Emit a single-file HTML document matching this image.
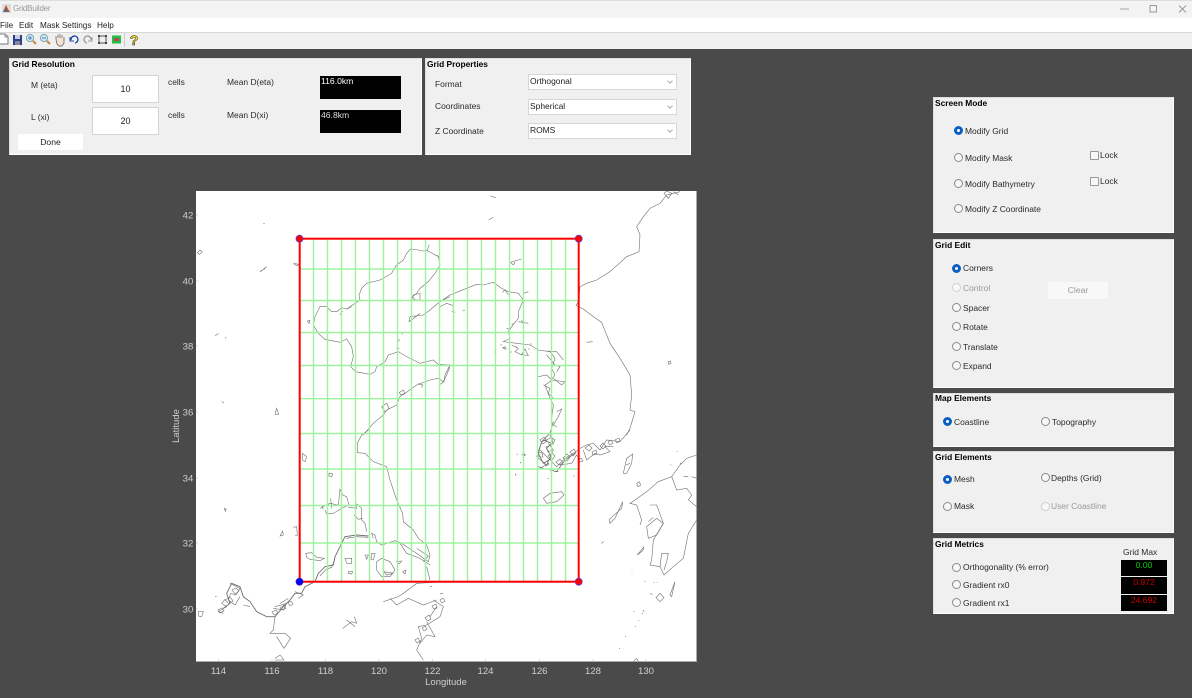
<!DOCTYPE html>
<html><head><meta charset="utf-8"><title>GridBuilder</title>
<style>
html,body{margin:0;padding:0;width:1192px;height:698px;overflow:hidden;background:#4a4a4a;font-family:"Liberation Sans",sans-serif;font-size:9px;color:#222}
div,span{position:absolute;box-sizing:border-box;white-space:nowrap}
.p{background:#f0f0f0;border:1px solid #fff;border-left-color:#ddd;border-top-color:#ddd}
.h{font-weight:bold;color:#000;font-size:8.4px;line-height:11px}
.t{line-height:11px;font-size:8.45px;color:#2a2a2a}
.m{line-height:11px;font-size:8.2px;color:#222}
.r{width:9px;height:9px;border-radius:50%;border:1px solid #8a8a8a;background:#f8f8f8}
.r.on{background:#fff;border:3px solid #0a5fc0}
.r.dis{border-color:#d0d0d0}
.dim{color:#999}
.inp{background:#fff;border:1px solid #d4d4d4;text-align:center;font-size:9px;color:#222}
.sel{background:#fff;border:1px solid #d6d6d6;font-size:8.45px;color:#222;line-height:13px;padding-left:1px}
.sel:after{content:"";position:absolute;right:4px;top:4px;width:3px;height:3px;border-right:1px solid #aaa;border-bottom:1px solid #aaa;transform:rotate(45deg)}
.blk{background:#000;font-size:8.6px;line-height:11px}
.cb{width:9px;height:9px;border:1px solid #999;background:#f8f8f8;border-radius:1px}
svg path{vector-effect:non-scaling-stroke}
.tk{fill:#cfcfcf;font-size:9.6px;font-family:"Liberation Sans",sans-serif;text-anchor:middle}
</style></head><body>

<div style="left:0;top:0;width:1192px;height:18px;background:#f3f3f3;border-top:1px solid #ddd"></div>
<div style="left:0;top:18px;width:1192px;height:14px;background:#fff"></div>
<div style="left:0;top:32px;width:1192px;height:17px;background:#f0f0f0;border-top:1px solid #d8d8d8"></div>

<svg style="position:absolute;left:2px;top:4px" width="9" height="9" viewBox="0 0 9 9"><rect width="9" height="9" fill="#ddd"/><path d="M1 8L4 1L6 5L8 8Z" fill="#c8501e"/><path d="M1 8L4 4L5 8Z" fill="#3070b0"/></svg>
<span style="left:13px;top:3px;font-size:8px;letter-spacing:-.25px;line-height:12px;color:#9a9a9a">GridBuilder</span>

<svg style="position:absolute;left:1115px;top:0" width="77" height="18"><path d="M5 9H14" stroke="#aaa"/><rect x="35" y="5.500" width="6.500" height="6.500" fill="none" stroke="#999"/><path d="M64 5.500L71 12.500M71 5.500L64 12.500" stroke="#999"/></svg>

<span class="m" style="left:0;top:20px">File</span>
<span class="m" style="left:19px;top:20px">Edit</span>
<span class="m" style="left:40px;top:20px">Mask Settings</span>
<span class="m" style="left:97px;top:20px">Help</span>

<svg style="position:absolute;left:0;top:32px" width="145" height="17" viewBox="0 0 145 17">
<path d="M-1 2H5L8 5V12H-1Z" fill="#fff" stroke="#777"/><path d="M5 2V5H8" fill="none" stroke="#999"/>
<rect x="13" y="3" width="9" height="10" fill="#2b3f8f"/><rect x="15" y="3" width="5" height="4" fill="#ccd"/><rect x="15" y="9" width="5" height="4" fill="#889"/>
<circle cx="30" cy="6" r="3.600" fill="#cfe6f8" stroke="#7aa"/><path d="M33 9L36 12" stroke="#c08a40" stroke-width="2"/><path d="M28 6H32M30 4V8" stroke="#36a" stroke-width=".8"/>
<circle cx="44" cy="6" r="3.600" fill="#cfe6f8" stroke="#7aa"/><path d="M47 9L50 12" stroke="#c08a40" stroke-width="2"/><path d="M42 6H46" stroke="#36a" stroke-width=".8"/>
<path d="M56 7V4M58 6V2.500M60 6V2M62 6V3M64 7V5M56 7L57 12L59 14H62L64 11V6" fill="#f3e3d0" stroke="#777" stroke-width=".9"/>
<path d="M71 8A3.500 3.500 0 1 1 75 11" fill="none" stroke="#1a3fa0" stroke-width="1.300"/><path d="M70 5V9H74" fill="none" stroke="#1a3fa0" stroke-width="1"/>
<path d="M91 8A3.500 3.500 0 1 0 87 11" fill="none" stroke="#999" stroke-width="1.300"/><path d="M92 5V9H88" fill="none" stroke="#999" stroke-width="1"/>
<rect x="99" y="4" width="7" height="7" fill="none" stroke="#555"/><path d="M98 3h2v2h-2zM105 3h2v2h-2zM98 10h2v2h-2zM105 10h2v2h-2z" fill="#444"/>
<rect x="112" y="3.500" width="9" height="8" fill="#22c040"/><rect x="114" y="6" width="5" height="3" fill="#c04060"/>
<path d="M124.500 1V15" stroke="#ccc"/>
<text x="134" y="13" font-family="Liberation Sans" font-weight="bold" font-size="14" text-anchor="middle" fill="#ffe000" stroke="#222" stroke-width=".5">?</text>
</svg>

<!-- Grid Resolution -->
<div class="p" style="left:9px;top:58px;width:413px;height:97px"></div>
<span class="h" style="left:12px;top:59px">Grid Resolution</span>
<span class="t" style="left:31px;top:80px">M (eta)</span>
<span class="t" style="left:31px;top:112px">L (xi)</span>
<div class="inp" style="left:92px;top:75px;width:67px;height:28px;line-height:26px">10</div>
<div class="inp" style="left:92px;top:107px;width:67px;height:28px;line-height:26px">20</div>
<span class="t" style="left:168px;top:77px">cells</span>
<span class="t" style="left:168px;top:110px">cells</span>
<span class="t" style="left:227px;top:77px">Mean D(eta)</span>
<span class="t" style="left:227px;top:110px">Mean D(xi)</span>
<div class="blk" style="left:320px;top:76px;width:81px;height:23px;color:#fff;padding-left:1px">116.0km</div>
<div class="blk" style="left:320px;top:110px;width:81px;height:23px;color:#ddd;padding-left:1px">46.8km</div>
<div style="left:18px;top:134px;width:65px;height:16px;background:#fff;border-radius:1px;text-align:center;line-height:16px;font-size:8.600px;color:#222">Done</div>

<!-- Grid Properties -->
<div class="p" style="left:425px;top:58px;width:266px;height:97px"></div>
<span class="h" style="left:427px;top:59px">Grid Properties</span>
<span class="t" style="left:435px;top:79px">Format</span>
<span class="t" style="left:435px;top:101px">Coordinates</span>
<span class="t" style="left:435px;top:126px">Z Coordinate</span>
<div class="sel" style="left:528px;top:74px;width:149px;height:16px">Orthogonal</div>
<div class="sel" style="left:528px;top:99px;width:149px;height:16px">Spherical</div>
<div class="sel" style="left:528px;top:123px;width:149px;height:16px">ROMS</div>

<!-- Plot -->
<svg style="position:absolute;left:0;top:0" width="1192" height="698" viewBox="0 0 1192 698">
<rect x="196" y="191" width="500" height="470" fill="#fff"/>
<path d="M196 661.500H696.500V191" fill="none" stroke="#aaa"/>
<g fill="none" stroke="#6e6e6e" stroke-width=".6">
 <g transform="translate(190 185) scale(.33333)">
  <path d="M715 185L712 197L700 198L685 195L662 192L650 205L640 225L620 240L610 255L605 265L570 285L530 295L515 310L507 330L510 345L495 355L470 372L455 368L440 380L425 380L410 365L390 365L375 395L370 420L385 445L405 463L450 472L470 462L485 485L490 515L482 545L497 560L540 568L555 560L560 545L585 530L595 510L625 500L650 515L690 535L730 525L745 538L780 540"/>
  <path d="M712 197L745 215L750 240L735 265L715 290L690 310L680 325L668 335L675 345L700 348L720 345"/>
  <path d="M780 335L750 350L720 375L700 390L660 395L657 410L665 405L690 385"/>
  <path d="M670 330L665 345H690V325ZM470 372L485 365M450 390L458 378"/>
  <path d="M520 750L550 715L580 690L590 675L620 660L630 635L645 625L680 600L720 585L745 580L760 590L770 570L780 545"/>
  <path d="M575 665L590 655L597 670L585 680ZM628 622L640 615L645 625L632 630ZM684 596L698 600L695 608"/>
  <path d="M30 195L37 200L28 208L22 203Z"/>
  <path d="M210 261L230 245M212 258L226 250M310 235L326 238L322 242L312 238M75 452L86 446M105 457L109 460M95 650L102 654M220 115h4"/>
  <path d="M260 670L266 688H255Z"/>
  <path d="M352 408L360 406L357 415Z"/>
  <path d="M620 490h8M625 470l3 -8M635 448l5 -5M715 185l3 -6M740 210l8 8"/>
 </g>
 <g transform="translate(440 185) scale(.33333)">
  <path d="M0 350L30 330L55 320L80 310L110 298L130 300L160 292L185 310L205 320L235 325L250 345L235 380L235 400L215 425L205 440L210 460L190 470L230 475L270 480L295 495L330 500L345 520L335 550L345 570L330 590L315 600L330 640L340 660L335 700L335 750"/>
  <path d="M720 20L680 30L660 55L630 70L610 95L590 125L600 150L597 200L560 215L510 260L470 285L440 295L420 305L415 350L408 362L430 372L460 395L485 412L510 475L540 520L570 570L575 630L570 675L585 680L570 730L560 750"/>
  <path d="M0 365L20 355L40 362M35 378L45 382M68 378L75 375M0 540H30L15 570L12 590L0 598M187 322L195 315L205 330M250 325L265 320"/>
  <path d="M152 33L167 38M146 105L160 97M212 232L245 222M212 232L220 240L225 232M440 472L458 470"/>
  <path d="M684 530L692 528L693 535L686 538Z"/>
  <path d="M672 25L680 18L695 25L685 40ZM700 20L715 30"/>
  <path d="M188 488L196 485L195 492ZM215 480L235 490L225 500L245 510L255 492L265 512L240 508M320 498L350 500L370 525M320 510L345 540L360 545L350 560M295 575L320 570L335 585L375 590L365 600L340 580M310 600L330 610L325 625L340 640M350 680L365 672L355 695L340 720L350 725"/>
  <path d="M200 430l8 3M215 418l5 -2M235 410l30 5M245 405l3 10"/>
 </g>
 <g transform="translate(160 430) scale(.33333)">
  <path d="M625 0L605 15L592 40L592 68L615 70L640 95L680 110L690 150L710 210L728 250L730 275L760 300L775 325L800 345L810 375L805 395L770 370L740 350L720 338L705 332L665 345L650 335L645 315L635 310L640 325"/>
  <path d="M720 340L740 370L780 385L810 405M770 355L805 378L790 395M800 410L810 450"/>
  <path stroke-width=".9" d="M625 318L590 315L555 320L540 350L525 380L520 405L495 410L475 430L465 455L435 470L425 490L405 490L390 510L370 530L345 560L320 560L290 545L270 515L250 500L240 470L215 460L200 490L210 520L190 535"/>
  <path d="M625 322L590 320L558 325M525 385L515 412L498 418L480 438"/>
  <path d="M210 460L240 475L228 495L212 490L205 510L225 525L240 500M165 500h5M195 508L185 520L200 530L175 545L190 550M250 525L270 530"/>
  <path d="M115 545L130 545L125 560L115 558Z"/>
  <path d="M193 235L199 238L196 244Z"/>
  <path d="M360 318L368 303L370 315ZM400 292L410 290L412 315L405 318"/>
  <path d="M428 70L440 80L435 95L428 90Z"/>
  <path d="M507 130L518 132L515 140L507 138Z"/>
  <path d="M480 235L510 220L535 225L540 178L548 195L560 200L567 225L545 235L520 250L500 252L495 240M485 225L490 238M512 205L515 235"/>
  <path d="M565 232L590 235L590 222L605 235L605 270L615 280L620 305M582 255L595 268L608 265"/>
  <path d="M437 370L455 368L470 382L493 385L480 392L450 388L440 382Z"/>
  <path d="M555 385L575 385L575 400L560 400Z"/>
  <path d="M565 425L578 425L575 432L565 430Z"/>
  <path d="M615 375L625 375L620 388Z"/>
  <path d="M635 370L645 370L640 390L633 388Z"/>
  <path d="M650 395L665 385L690 395L705 420L690 440L665 440L650 420Z"/>
  <path d="M672 425L700 430L680 435ZM710 395L725 393L718 402ZM728 425L738 420L735 432Z"/>
  <path d="M860 455L770 460L730 490L715 500L670 515M690 505L710 525L745 505L790 525L830 510"/>
  <path d="M345 530L380 520L370 540L340 535M360 520L385 505M405 485L430 495L415 505"/>
  <path d="M345 560L340 600L330 610L375 610L392 625L372 655L350 620"/>
  <path d="M345 685L360 675L372 690H345"/>
  <path d="M548 595L575 575L590 580L583 560M560 570L585 590"/>
  <path d="M820 510L850 530L840 560L800 585L775 590L785 625L770 660L790 690M800 575L825 620L800 615L780 640M830 530L810 560M840 490h10M810 470h6"/>
 </g>
 <g transform="translate(440 430) scale(.33333)">
  <path d="M420 55L440 45L460 40L480 60L500 30L540 35L570 0M430 60L440 90L465 70L480 75L510 65L495 50L520 50"/>
  <path d="M335 0L330 25L305 35L290 80L320 105L340 60L325 40M300 60L325 85L350 110L375 85L415 60M345 125H355M300 115L325 100M360 105L395 100L410 75L420 90"/>
  <path d="M245 75L252 70L250 80M240 98h3M225 135h4M322 145h4M400 138h5"/>
  <path d="M310 205L330 190L365 185L372 195L350 215L320 220Z"/>
  <path d="M550 130L560 85L578 72L575 100L560 130Z"/>
  <path d="M558 105L570 100"/>
  <path d="M590 160L598 155L602 165L594 170Z"/>
  <path d="M770 75L740 85L720 105L695 140L655 155L620 185L585 210L570 220L590 225L605 270L600 285"/>
  <path d="M695 140L710 180L740 175L755 195L745 210L770 230"/>
  <path d="M630 225L650 225L670 280L640 330L635 390L630 405L660 410L672 435L700 410L730 385L745 310L770 270M660 410L665 370L685 370L680 395L672 420"/>
  <path d="M620 290L650 265L670 280L650 315L625 325ZM640 262L625 275"/>
  <path d="M508 268L545 235L548 215L525 265L510 280Z"/>
  <path d="M592 375L612 350L608 362Z"/>
  <path d="M660 490L672 503L660 515L648 503Z"/>
  <path d="M690 495L705 455L695 500Z"/>
  <path d="M485 340l6 -5M630 490l8 4M580 545h3M610 540l2 6M605 550h4M595 572h3M585 590h3M555 620h3M537 655h3M613 455h3M640 458h3M650 458h2M575 420h2M710 65h3M690 105h4"/>
  <path d="M580 695L590 685L595 695"/>
  <path d="M720 100h5M755 140L770 145M730 140H745"/>
 </g>
 <g transform="translate(500 420) scale(.33333)" stroke-width=".8">
  <path d="M160 5L150 40L125 65L115 100L130 130L155 115L140 85L155 70L130 60M115 140L130 145M150 150L170 155L195 120L225 100"/>
  <path d="M70 100L76 105L68 108M50 103h3M60 128h3M45 163h3"/>
 </g>
 <path d="M540 440l4 -3l3 4l-4 3zM546 447l5 -2l1 5l-4 2zM538 452l4 1l1 4l-4 0zM548 456l4 -3l3 3l-3 4zM544 463l3 -2l2 3l-3 2zM552 438l3 2l-2 4zM556 462l4 -3l3 4l-4 2zM563 458l4 -4l3 3l-3 4zM570 452l4 -3l2 4l-3 3zM585 448l4 -3l3 3l-3 3zM592 452l4 -2l1 4l-4 1zM600 446l3 -3l3 3l-3 3zM608 442l3 -2l2 3l-3 2zM615 440l4 -2l1 3l-3 2zM578 460l3 -2l2 3l-3 1z"/>
 <path d="M505 349h2M510 352h2M515 347h2M522 353h2M528 349h2M500 345h2M494 352h2M530 344h2"/>
 <path d="M225 600l5 -3l3 4l-4 3zM232 590l4 -2l3 3l-4 3zM218 610l4 -2l2 3l-4 2zM272 612l4 -2l2 3l-4 2zM280 608l4 -3l2 3l-3 2zM288 603l3 -2l2 3l-3 2zM440 600l3 -2l2 3l-3 2zM432 606l4 -2l1 4l-3 1zM425 618l4 -3l2 4l-3 2zM422 628l3 -2l2 3l-3 2zM415 640l3 -2l2 3l-3 2z"/>
</g>
<g stroke="#9df39d" stroke-width="1.400" fill="none">
 <path d="M313.500 239V582M327.500 239V582M341.500 239V582M355.500 239V582M369.500 239V582M383.500 239V582M397.500 239V582M411.500 239V582M425.500 239V582M439.500 239V582M453.500 239V582M467.500 239V582M481.500 239V582M495.500 239V582M509.500 239V582M523.500 239V582M537.500 239V582M551.500 239V582M565.500 239V582"/>
 <path d="M300 269H579M300 300.500H579M300 332.500H579M300 365.500H579M300 398.700H579M300 433.500H579M300 469H579M300 505.500H579M300 543H579"/>
</g>
<rect x="299.700" y="238.700" width="279" height="343" fill="none" stroke="#f00" stroke-width="2"/>
<circle cx="299.500" cy="238.700" r="3.500" fill="#f00" stroke="#5a3ad0" stroke-width=".8"/>
<circle cx="578.700" cy="238.700" r="3.500" fill="#f00" stroke="#5a3ad0" stroke-width=".8"/>
<circle cx="578.700" cy="581.700" r="3.500" fill="#f00" stroke="#5a3ad0" stroke-width=".8"/>
<circle cx="299.500" cy="581.700" r="3.500" fill="#00f" stroke="#3020b0" stroke-width=".8"/>
<path d="M218.500 661v-2M272 661v-2M325.500 661v-2M379 661v-2M432.500 661v-2M485.500 661v-2M539.500 661v-2M593 661v-2M646 661v-2M196 215h2M196 281h2M196 346h2M196 412h2M196 478h2M196 543h2M196 609h2" stroke="#ddd" fill="none"/>
<g class="tk">
<text class="tk" x="218.500" y="674">114</text><text class="tk" x="272" y="674">116</text><text class="tk" x="325.500" y="674">118</text><text class="tk" x="379" y="674">120</text><text class="tk" x="432.500" y="674">122</text><text class="tk" x="485.500" y="674">124</text><text class="tk" x="539.500" y="674">126</text><text class="tk" x="593" y="674">128</text><text class="tk" x="646" y="674">130</text>
<text class="tk" x="188" y="218.500">42</text><text class="tk" x="188" y="284.500">40</text><text class="tk" x="188" y="349.500">38</text><text class="tk" x="188" y="415.500">36</text><text class="tk" x="188" y="481.500">34</text><text class="tk" x="188" y="546.500">32</text><text class="tk" x="188" y="612.500">30</text>
<text class="tk" x="446" y="685" style="font-size:9.500px">Longitude</text>
<text class="tk" transform="translate(179 426) rotate(-90)" style="font-size:9.500px">Latitude</text>
</g>
</svg>

<!-- Screen Mode -->
<div class="p" style="left:933px;top:97px;width:241px;height:136px"></div>
<span class="h" style="left:935px;top:98px">Screen Mode</span>
<div class="r on" style="left:954px;top:126px"></div><span class="t" style="left:965px;top:126px">Modify Grid</span>
<div class="r" style="left:954px;top:153px"></div><span class="t" style="left:965px;top:153px">Modify Mask</span>
<div class="r" style="left:954px;top:179px"></div><span class="t" style="left:965px;top:179px">Modify Bathymetry</span>
<div class="r" style="left:954px;top:204px"></div><span class="t" style="left:965px;top:204px">Modify Z Coordinate</span>
<div class="cb" style="left:1090px;top:151px"></div><span class="t" style="left:1100px;top:150px">Lock</span>
<div class="cb" style="left:1090px;top:177px"></div><span class="t" style="left:1100px;top:176px">Lock</span>

<!-- Grid Edit -->
<div class="p" style="left:933px;top:239px;width:241px;height:149px"></div>
<span class="h" style="left:935px;top:240px">Grid Edit</span>
<div class="r on" style="left:952px;top:264px"></div><span class="t" style="left:963px;top:263px">Corners</span>
<div class="r dis" style="left:952px;top:283px"></div><span class="t dim" style="left:963px;top:283px">Control</span>
<div class="r" style="left:952px;top:303px"></div><span class="t" style="left:963px;top:303px">Spacer</span>
<div class="r" style="left:952px;top:322px"></div><span class="t" style="left:963px;top:322px">Rotate</span>
<div class="r" style="left:952px;top:342px"></div><span class="t" style="left:963px;top:342px">Translate</span>
<div class="r" style="left:952px;top:361px"></div><span class="t" style="left:963px;top:361px">Expand</span>
<div style="left:1048px;top:282px;width:60px;height:17px;background:#f8f8f8;text-align:center;line-height:17px;font-size:8.600px;color:#999">Clear</div>

<!-- Map Elements -->
<div class="p" style="left:933px;top:393px;width:241px;height:54px"></div>
<span class="h" style="left:935px;top:393px">Map Elements</span>
<div class="r on" style="left:943px;top:417px"></div><span class="t" style="left:954px;top:417px">Coastline</span>
<div class="r" style="left:1041px;top:417px"></div><span class="t" style="left:1052px;top:417px">Topography</span>

<!-- Grid Elements -->
<div class="p" style="left:933px;top:451px;width:241px;height:82px"></div>
<span class="h" style="left:935px;top:452px">Grid Elements</span>
<div class="r on" style="left:943px;top:475px"></div><span class="t" style="left:954px;top:474px">Mesh</span>
<div class="r" style="left:1041px;top:473px"></div><span class="t" style="left:1051px;top:473px">Depths (Grid)</span>
<div class="r" style="left:943px;top:502px"></div><span class="t" style="left:954px;top:501px">Mask</span>
<div class="r dis" style="left:1041px;top:502px"></div><span class="t dim" style="left:1051px;top:501px">User Coastline</span>

<!-- Grid Metrics -->
<div class="p" style="left:933px;top:538px;width:241px;height:76px"></div>
<span class="h" style="left:935px;top:539px">Grid Metrics</span>
<span class="t" style="left:1123px;top:547px">Grid Max</span>
<div class="r" style="left:952px;top:563px"></div><span class="t" style="left:963px;top:562px">Orthogonality (% error)</span>
<div class="r" style="left:952px;top:580px"></div><span class="t" style="left:963px;top:580px">Gradient rx0</span>
<div class="r" style="left:952px;top:598px"></div><span class="t" style="left:963px;top:598px">Gradient rx1</span>
<div class="blk" style="left:1121px;top:560px;width:46px;height:16px;color:#0c0;text-align:center">0.00</div>
<div class="blk" style="left:1121px;top:577px;width:46px;height:17px;color:#c00;text-align:center">0.972</div>
<div class="blk" style="left:1121px;top:595px;width:46px;height:16px;color:#c00;text-align:center">24.692</div>
</body></html>
